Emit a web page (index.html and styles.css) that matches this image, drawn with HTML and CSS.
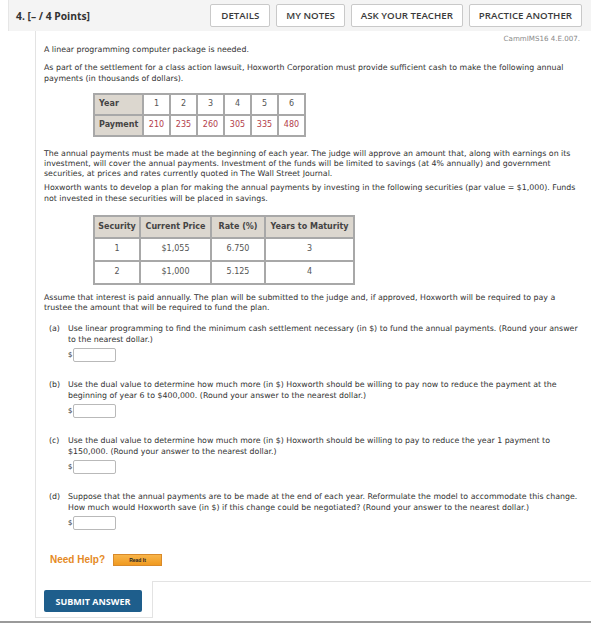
FILE: index.html
```html
<!DOCTYPE html>
<html>
<head>
<meta charset="utf-8">
<link rel="stylesheet" href="styles.css">
</head>
<body>
<div class="page">
  <div class="qhead">
    <div class="qtitle">4. [– / 4 Points]</div>
    <div class="qbtns">
      <span class="btn">DETAILS</span>
      <span class="btn">MY NOTES</span>
      <span class="btn">ASK YOUR TEACHER</span>
      <span class="btn">PRACTICE ANOTHER</span>
    </div>
  </div>
  <div class="qbody">
    <div class="code">CammIMS16 4.E.007.</div>
    <p class="p1">A linear programming computer package is needed.</p>
    <p class="p2">As part of the settlement for a class action lawsuit, Hoxworth Corporation must provide sufficient cash to make the following annual payments (in thousands of dollars).</p>
    <table class="t1">
      <tr><th>Year</th><td>1</td><td>2</td><td>3</td><td>4</td><td>5</td><td>6</td></tr>
      <tr><th>Payment</th><td class="red">210</td><td class="red">235</td><td class="red">260</td><td class="red">305</td><td class="red">335</td><td class="red">480</td></tr>
    </table>
    <p class="p3">The annual payments must be made at the beginning of each year. The judge will approve an amount that, along with earnings on its investment, will cover the annual payments. Investment of the funds will be limited to savings (at 4% annually) and government securities, at prices and rates currently quoted in The Wall Street Journal.</p>
    <p class="p4">Hoxworth wants to develop a plan for making the annual payments by investing in the following securities (par value = $1,000). Funds not invested in these securities will be placed in savings.</p>
    <table class="t2">
      <tr><th class="c1">Security</th><th class="c2">Current Price</th><th class="c3">Rate (%)</th><th class="c4">Years to Maturity</th></tr>
      <tr><td>1</td><td>$1,055</td><td>6.750</td><td>3</td></tr>
      <tr><td>2</td><td>$1,000</td><td>5.125</td><td>4</td></tr>
    </table>
    <p class="p5">Assume that interest is paid annually. The plan will be submitted to the judge and, if approved, Hoxworth will be required to pay a trustee the amount that will be required to fund the plan.</p>

    <div class="part pa">
      <div class="plabel">(a)</div>
      <div class="ptext">
        <div>Use linear programming to find the minimum cash settlement necessary (in $) to fund the annual payments. (Round your answer to the nearest dollar.)</div>
        <div class="ans"><span class="dollar">$</span><span class="inp"></span></div>
      </div>
    </div>
    <div class="part">
      <div class="plabel">(b)</div>
      <div class="ptext">
        <div>Use the dual value to determine how much more (in $) Hoxworth should be willing to pay now to reduce the payment at the beginning of year 6 to $400,000. (Round your answer to the nearest dollar.)</div>
        <div class="ans"><span class="dollar">$</span><span class="inp"></span></div>
      </div>
    </div>
    <div class="part">
      <div class="plabel">(c)</div>
      <div class="ptext">
        <div>Use the dual value to determine how much more (in $) Hoxworth should be willing to pay to reduce the year 1 payment to $150,000. (Round your answer to the nearest dollar.)</div>
        <div class="ans"><span class="dollar">$</span><span class="inp"></span></div>
      </div>
    </div>
    <div class="part">
      <div class="plabel">(d)</div>
      <div class="ptext">
        <div>Suppose that the annual payments are to be made at the end of each year. Reformulate the model to accommodate this change. How much would Hoxworth save (in $) if this change could be negotiated? (Round your answer to the nearest dollar.)</div>
        <div class="ans"><span class="dollar">$</span><span class="inp"></span></div>
      </div>
    </div>

    <div class="help">
      <span class="needhelp">Need Help?</span>
      <span class="readit">Read It</span>
    </div>
  </div>
  <div class="qfoot">
    <div class="subbox"><span class="submit">SUBMIT ANSWER</span></div>
    <div class="filler"></div>
  </div>
  <div class="bottomline"></div>
</div>
</body>
</html>
```

FILE: styles.css
```css
html, body {
  margin: 0;
  padding: 0;
  background: #ffffff;
}
body {
  width: 591px;
  height: 626px;
  overflow: hidden;
  font-family: "DejaVu Sans", Verdana, sans-serif;
  color: #333333;
}
.page {
  width: 591px;
}
.qhead {
  margin-left: 8px;
  height: 31px;
  background: #f4f4f4;
  border-left: 1px solid #e6e6e6;
  display: flex;
  align-items: center;
  justify-content: space-between;
  padding: 0 9px 0 7px;
  box-sizing: border-box;
}
.qtitle {
  font-family: "Open Sans", sans-serif;
  font-weight: 700;
  font-size: 10.3px;
  color: #333;
}
.qbtns {
  display: flex;
  gap: 6px;
}
.btn {
  display: flex;
  align-items: center;
  justify-content: center;
  height: 23px;
  box-sizing: border-box;
  padding: 0 9px;
  background: #fff;
  border: 1px solid #c9c9c9;
  border-radius: 2px;
  font-family: "Open Sans", sans-serif;
  font-weight: 600;
  font-size: 9.7px;
  color: #3a3a3a;
}
.btn:first-child {
  padding: 0 10px;
}
.qbody {
  margin-left: 35px;
  border-left: 1px solid #e3e3e3;
  padding: 3px 8px 0 8px;
  height: 550px;
  box-sizing: border-box;
  font-size: 7.85px;
  line-height: 10.3px;
}
.code {
  text-align: right;
  font-size: 7.1px;
  line-height: 10px;
  color: #8a8a8a;
  padding-right: 3px;
}
p {
  margin: 0;
}
.p1 { margin-top: 1px; }
.p2 { margin-top: 8px; }
.p3 { margin-top: 12px; }
.p4 { margin-top: 3.5px; }
.p5 { margin-top: 8px; }
table {
  border-collapse: collapse;
  margin-left: 49px;
  color: #555;
}
th, td {
  border: 2px solid #a8a8a8;
  text-align: center;
  padding: 0;
  font-size: 8px;
}
th {
  background: #dcd7cf;
  font-weight: 700;
  color: #444;
}
.t1 {
  margin-top: 9px;
}
.t1 th {
  width: 43px;
  height: 19px;
  text-align: left;
  padding-left: 4px;
}
.t1 td {
  width: 25px;
  height: 19px;
}
.t1 .red {
  color: #b3404a;
}
.t2 {
  margin-top: 11px;
}
.t2 th { height: 20px; }
.t2 td { height: 21px; }
.t2 .c1 { width: 44px; }
.t2 .c2 { width: 69px; }
.t2 .c3 { width: 52px; }
.t2 .c4 { width: 87px; }
.part {
  display: flex;
  padding-left: 5px;
  margin-top: 18.4px;
}
.part.pa {
  margin-top: 11px;
}
.plabel {
  width: 19px;
  flex: none;
}
.ptext {
  flex: 1;
}
.ans {
  display: flex;
  align-items: center;
  margin-top: 3px;
}
.dollar {
  width: 5px;
  font-size: 7px;
}
.inp {
  width: 43px;
  height: 14px;
  box-sizing: border-box;
  border: 1px solid #b9b9b9;
  border-radius: 2px;
  background: #fff;
}
.help {
  display: flex;
  align-items: center;
  margin-top: 24px;
  padding-left: 6px;
}
.needhelp {
  font-family: "Liberation Sans", Arial, sans-serif;
  font-weight: 700;
  font-size: 10px;
  color: #e58a25;
}
.readit {
  margin-left: 8px;
  width: 49px;
  height: 12px;
  box-sizing: border-box;
  display: flex;
  align-items: center;
  justify-content: center;
  background: linear-gradient(#f8b54a, #f09a20);
  border: 1px solid #d98a2a;
  font-family: "Liberation Sans", Arial, sans-serif;
  font-weight: 700;
  font-size: 5px;
  color: #222;
}
.qfoot {
  display: flex;
  height: 37px;
}
.subbox {
  margin-left: 35px;
  width: 118px;
  box-sizing: border-box;
  border-left: 1px solid #e3e3e3;
  border-right: 1px solid #e3e3e3;
  border-bottom: 1px solid #e3e3e3;
  padding: 9px 0 0 8px;
}
.submit {
  display: flex;
  align-items: center;
  justify-content: center;
  width: 98px;
  height: 22px;
  background: #1e5e8c;
  border-radius: 2px;
  color: #fff;
  font-family: "Open Sans", sans-serif;
  font-weight: 700;
  font-size: 9px;
}
.filler {
  flex: 1;
  border-top: 1px solid #e3e3e3;
}
.bottomline {
  margin-top: 3px;
  height: 2px;
  background: #9a9a9a;
}
```
